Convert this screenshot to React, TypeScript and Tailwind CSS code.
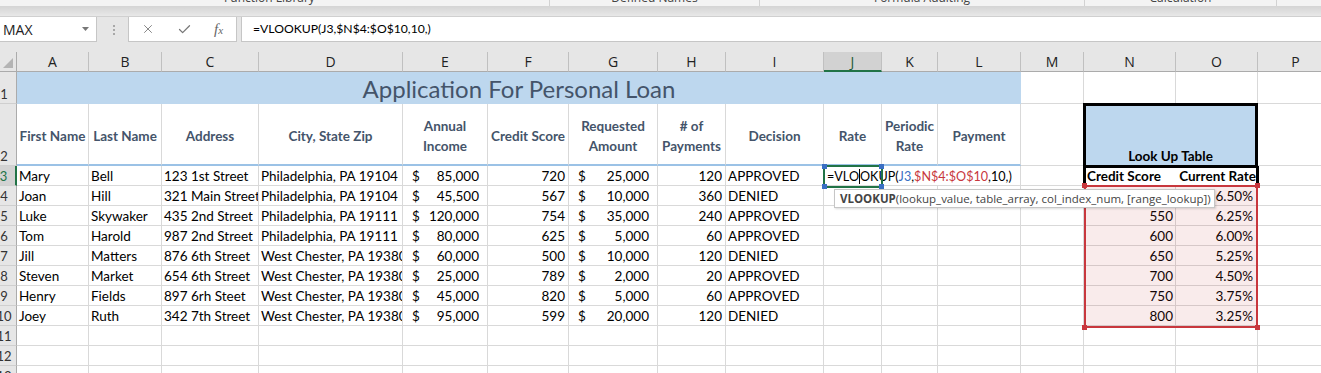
import React from "react";
import { X, Check } from "lucide-react";

const cols = ["A", "B", "C", "D", "E", "F", "G", "H", "I", "J", "K", "L", "M", "N", "O", "P"];

const data = [
  ["Mary", "Bell", "123 1st Street", "Philadelphia, PA 19104", "85,000", "720", "25,000", "120", "APPROVED"],
  ["Joan", "Hill", "321 Main Street", "Philadelphia, PA 19104", "45,500", "567", "10,000", "360", "DENIED"],
  ["Luke", "Skywaker", "435 2nd Street", "Philadelphia, PA 19111", "120,000", "754", "35,000", "240", "APPROVED"],
  ["Tom", "Harold", "987 2nd Street", "Philadelphia, PA 19111", "80,000", "625", "5,000", "60", "APPROVED"],
  ["Jill", "Matters", "876 6th Street", "West Chester, PA 19380", "60,000", "500", "10,000", "120", "DENIED"],
  ["Steven", "Market", "654 6th Street", "West Chester, PA 19380", "25,000", "789", "2,000", "20", "APPROVED"],
  ["Henry", "Fields", "897 6rh Steet", "West Chester, PA 19380", "45,000", "820", "5,000", "60", "APPROVED"],
  ["Joey", "Ruth", "342 7th Street", "West Chester, PA 19380", "95,000", "599", "20,000", "120", "DENIED"],
];

const lookup = [
  ["", "6.50%"],
  ["550", "6.25%"],
  ["600", "6.00%"],
  ["650", "5.25%"],
  ["700", "4.50%"],
  ["750", "3.75%"],
  ["800", "3.25%"],
];

const G = "border-r border-b border-[#d9d9d9]";
const TXT = "whitespace-nowrap overflow-hidden flex items-end pb-0 leading-[17px]";

function RowHdr({ n, sel = false }: { n: number; sel?: boolean }) {
  return (
    <div
      className={
        "flex items-end pb-[1px] justify-center pr-[8px] text-[13px] leading-[16px] border-b border-[#cfcfcf] " +
        (sel
          ? "bg-[#d2d2d2] text-[#217346] border-r-2 border-r-[#217346]"
          : "bg-[#e6e6e6] text-[#333] border-r border-r-[#ababab]")
      }
    >
      {n}
    </div>
  );
}

function Acc({ v }: { v: string }) {
  return (
    <div className={G + " " + TXT + " justify-between pl-[9px] pr-[8px]"}>
      <span>$</span>
      <span>{v}</span>
    </div>
  );
}

function Hdr({ lines }: { lines: string[] }) {
  return (
    <div className="border-r border-[#d9d9d9] border-b-2 border-b-[#9bc2e6] flex flex-col items-center justify-center pt-[4px] font-bold text-[#44546a] leading-[20px] whitespace-nowrap overflow-hidden">
      {lines.map((l, i) => (
        <span key={i}>{l}</span>
      ))}
    </div>
  );
}

function DataCells({ r }: { r: string[] }) {
  return (
    <>
      {r.map((v, i) =>
        i === 4 || i === 6 ? (
          <Acc key={i} v={v} />
        ) : (
          <div
            key={i}
            className={G + " " + TXT + (i === 5 || i === 7 ? " justify-end pr-[3px]" : " pl-[2px]")}
          >
            {v}
          </div>
        )
      )}
    </>
  );
}

export default function App() {
  return (
    <div className="w-[1321px] h-[373px] overflow-hidden bg-white flex flex-col">
      {/* ribbon bottom strip with group labels */}
      <div className="h-[6px] shrink-0 bg-[#f3f3f3] flex overflow-hidden text-[12px] leading-[14px] text-[#444] font-['Open_Sans',sans-serif]">
        <div className="w-[550px] shrink-0 flex justify-center border-r border-[#d2d2d2]">
          <span className="mt-[-9px] mr-[10px]">Function Library</span>
        </div>
        <div className="w-[210px] shrink-0 flex justify-center border-r border-[#d2d2d2]">
          <span className="mt-[-9px]">Defined Names</span>
        </div>
        <div className="w-[325px] shrink-0 flex justify-center border-r border-[#d2d2d2]">
          <span className="mt-[-9px]">Formula Auditing</span>
        </div>
        <div className="w-[192px] shrink-0 flex justify-center border-r border-[#d2d2d2]">
          <span className="mt-[-9px]">Calculation</span>
        </div>
        <div className="flex-1" />
      </div>
      {/* shadow band */}
      <div className="h-[11px] shrink-0 bg-gradient-to-b from-[#d4d4d4] to-[#e8e8e8] border-b border-[#d0d0d0]" />
      {/* formula bar */}
      <div className="h-[35px] shrink-0 bg-[#e6e6e6] flex items-start">
        <div className="w-[97px] h-[25px] bg-white border-r border-b border-[#c6c6c6] flex items-center justify-between pl-[3px] pr-[7px] text-[14px] text-[#222] font-['Open_Sans',sans-serif]">
          <span>MAX</span>
          <svg width="7" height="4" viewBox="0 0 7 4">
            <path d="M0 0h7L3.5 4z" fill="#777" />
          </svg>
        </div>
        <div className="w-[31px] h-[25px] flex items-center justify-center">
          <div className="flex flex-col gap-[2px] ml-[2px]">
            <span className="w-[2px] h-[2px] bg-[#a8a8a8]" />
            <span className="w-[2px] h-[2px] bg-[#a8a8a8]" />
            <span className="w-[2px] h-[2px] bg-[#a8a8a8]" />
          </div>
        </div>
        <div className="w-[109px] h-[25px] bg-white border border-t-0 border-[#c6c6c6] flex items-center pl-[12px] gap-[22px]">
          <X size={14} strokeWidth={1.5} color="#777" />
          <Check size={15} strokeWidth={2} color="#777" />
          <span className="font-['Liberation_Serif',serif] italic text-[15px] text-[#666] leading-none">
            f<span className="text-[11px]">x</span>
          </span>
        </div>
        <div className="w-[4px]" />
        <div className="flex-1 h-[25px] bg-white border-l border-b border-[#c6c6c6] flex items-center pl-[11px] text-[12.2px] text-black font-[Lato]">
          =VLOOKUP(J3,$N$4:$O$10,10,)
        </div>
      </div>

      {/* sheet */}
      <div className="relative flex-1 font-[Lato] text-[13.5px] text-black">
        <div className="grid grid-cols-[17px_72px_73px_97px_144px_85px_81px_89px_68px_98px_58px_56px_83px_63px_92px_82px_76px] grid-rows-[20px_32px_62px_repeat(11,20px)]">
          {/* column headers */}
          <div className="bg-[#e6e6e6] border-r border-b border-[#ababab] flex items-end justify-end pr-[3px] pb-[3px]">
            <svg width="10" height="10" viewBox="0 0 10 10">
              <path d="M10 0V10H0z" fill="#b4b4b4" />
            </svg>
          </div>
          {cols.map((c) => (
            <div
              key={c}
              className={
                "flex items-center justify-center text-[14px] font-['Open_Sans',sans-serif] border-r border-[#c0c0c0] " +
                (c === "J"
                  ? "bg-[#d2d2d2] text-[#1e5a38] border-b-2 border-b-[#217346]"
                  : "bg-[#e6e6e6] text-[#222] border-b border-b-[#ababab]")
              }
            >
              {c}
            </div>
          ))}

          {/* row 1 */}
          <RowHdr n={1} />
          <div className="col-span-12 bg-[#bdd7ee] flex items-center justify-center text-[24px] leading-[28px] text-[#44546a] pt-[1px]">
            Application For Personal Loan
          </div>
          <div className={G} />
          <div className={G} />
          <div className={G} />
          <div className={G} />

          {/* row 2 */}
          <RowHdr n={2} />
          <Hdr lines={["First Name"]} />
          <Hdr lines={["Last Name"]} />
          <Hdr lines={["Address"]} />
          <Hdr lines={["City, State Zip"]} />
          <Hdr lines={["Annual", "Income"]} />
          <Hdr lines={["Credit Score"]} />
          <Hdr lines={["Requested", "Amount"]} />
          <Hdr lines={["# of", "Payments"]} />
          <Hdr lines={["Decision"]} />
          <Hdr lines={["Rate"]} />
          <Hdr lines={["Periodic", "Rate"]} />
          <Hdr lines={["Payment"]} />
          <div className={G} />
          <div className="col-span-2 relative z-10 mt-[-1px] mb-[-2px] ml-[-1px] bg-[#bdd7ee] border-[3px] border-black flex items-end justify-center pb-0 font-bold leading-[18px]">
            Look Up Table
          </div>
          <div className={G} />

          {/* row 3 */}
          <RowHdr n={3} sel />
          <DataCells r={data[0]} />
          <div className={"col-span-3 " + G + " " + TXT + " pl-[3px] text-[12.6px]"}>
            <span>=VLO</span>
            <span className="w-px h-[15px] bg-black mb-[1px]" />
            <span>OKUP(</span>
            <span className="text-[#3a6fc4]">J3</span>
            <span>,</span>
            <span className="text-[#c8373d]">$N$4:$O$10</span>
            <span>,10,)</span>
          </div>
          <div className={G} />
          <div className={"border-b border-[#d9d9d9] border-l-[3px] border-l-black ml-[-1px] font-bold " + TXT + " pl-[1px] overflow-visible"}>
            Credit Score
          </div>
          <div className={"border-b border-[#d9d9d9] border-r-[3px] border-r-black mr-[-1px] font-bold " + TXT + " justify-end pr-0 overflow-visible"}>
            Current Rate
          </div>
          <div className={G} />

          {/* rows 4-10 */}
          {data.slice(1).map((r, ri) => (
            <React.Fragment key={ri}>
              <RowHdr n={ri + 4} />
              <DataCells r={r} />
              <div className={G} />
              <div className={G} />
              <div className={G} />
              <div className={G} />
              <div className={G + " " + TXT + " justify-end pr-[2px]"}>{lookup[ri][0]}</div>
              <div className={G + " " + TXT + " justify-end pr-[4px]"}>{lookup[ri][1]}</div>
              <div className={G} />
            </React.Fragment>
          ))}

          {/* rows 11-13 */}
          {[11, 12, 13].map((n) => (
            <React.Fragment key={n}>
              <RowHdr n={n} />
              {cols.map((c) => (
                <div key={c} className={G} />
              ))}
            </React.Fragment>
          ))}
        </div>

        {/* active cell J3 */}
        <div className="absolute left-[823px] top-[113px] w-[60px] h-[23px] border-2 border-[#217346] pointer-events-none" />
        <div className="absolute left-[822px] top-[112px] w-[5px] h-[5px] bg-[#3a6fc4]" />
        <div className="absolute left-[879px] top-[112px] w-[5px] h-[5px] bg-[#3a6fc4]" />
        <div className="absolute left-[822px] top-[132px] w-[5px] h-[5px] bg-[#3a6fc4]" />
        <div className="absolute left-[879px] top-[132px] w-[5px] h-[5px] bg-[#3a6fc4]" />

        {/* referenced range N4:O10 */}
        <div className="absolute left-[1084px] top-[133px] w-[174px] h-[143px] border-2 border-[#c8373d] bg-[#c8373d]/10 pointer-events-none" />
        <div className="absolute left-[1082px] top-[131px] w-[5px] h-[5px] bg-[#c8373d]" />
        <div className="absolute left-[1255px] top-[131px] w-[5px] h-[5px] bg-[#c8373d]" />
        <div className="absolute left-[1082px] top-[273px] w-[5px] h-[5px] bg-[#c8373d]" />
        <div className="absolute left-[1255px] top-[273px] w-[5px] h-[5px] bg-[#c8373d]" />

        {/* function tooltip */}
        <div className="absolute left-[834px] top-[137px] h-[19px] w-[381px] bg-white border border-[#c6c6c6] shadow-[1px_1px_2px_rgba(0,0,0,0.15)] flex items-center pl-[5px] text-[11.5px] text-[#444] whitespace-nowrap overflow-hidden font-['Open_Sans',sans-serif] leading-none">
          <span className="font-bold">VLOOKUP</span>
          <span>(lookup_value, table_array, col_index_num, [range_lookup])</span>
        </div>
      </div>
    </div>
  );
}
